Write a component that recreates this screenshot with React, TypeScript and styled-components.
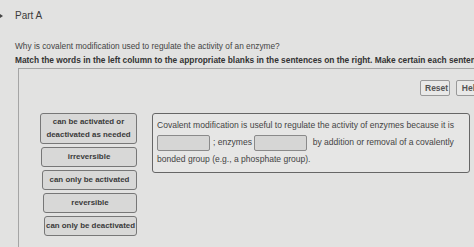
import styled, { createGlobalStyle } from 'styled-components'

const Global = createGlobalStyle`
  html, body {
    margin: 0;
    padding: 0;
    background: #e2e2e1;
    overflow: hidden;
  }
  body {
    font-family: "Liberation Sans", Arial, sans-serif;
    color: #333;
  }
`

const Page = styled.div`
  width: 474px;
  height: 247px;
  padding-top: 10px;
  box-sizing: border-box;
  overflow: hidden;
`

const Header = styled.div`
  display: flex;
  align-items: center;
  height: 11px;
`

const Caret = styled.span`
  width: 0;
  height: 0;
  border-top: 2px solid transparent;
  border-bottom: 2px solid transparent;
  border-left: 3px solid #444;
  margin-right: 12px;
`

const Title = styled.div`
  font-size: 10px;
  color: #3a3a3a;
`

const Question = styled.p`
  margin: 20px 0 0 15px;
  font-size: 8.3px;
  color: #444;
  white-space: nowrap;
`

const Instruction = styled.p`
  margin: 4px 0 0 15px;
  font-size: 8.35px;
  font-weight: bold;
  color: #333;
  white-space: nowrap;
`

const Panel = styled.div`
  margin: 3px 0 0 18px;
  width: 490px;
  height: 200px;
  border-top: 1px solid #a5a5a5;
  border-left: 1px solid #a5a5a5;
  padding: 11px 0 0 21px;
  box-sizing: border-box;
`

const Toolbar = styled.div`
  display: flex;
  justify-content: flex-end;
  gap: 6px;
  padding-right: 22px;
`

const ToolButton = styled.button<{ $w: number }>`
  height: 16px;
  padding: 0 4px;
  font-family: inherit;
  font-size: 8.5px;
  font-weight: bold;
  color: #555;
  background: #e9e9e8;
  border: 1px solid #999;
  border-radius: 2px;
  width: ${p => p.$w}px;
`

const Content = styled.div`
  display: flex;
  align-items: flex-start;
  gap: 15px;
  margin-top: 17px;
`

const Tiles = styled.div`
  display: flex;
  flex-direction: column;
  gap: 3px;
  width: 97px;
`

const Tile = styled.div<{ $shift: number; $multi: boolean }>`
  margin-left: ${p => p.$shift}px;
  padding: 2px 1px;
  font-size: 7.9px;
  font-weight: bold;
  line-height: ${p => (p.$multi ? '12.5px' : '14px')};
  text-align: center;
  white-space: ${p => (p.$multi ? 'normal' : 'nowrap')};
  color: #3a3a3a;
  background: #d8d8d7;
  border: 1px solid #777;
  border-radius: 3px;
`

const SentenceBox = styled.div`
  width: 318px;
  height: 60px;
  box-sizing: border-box;
  padding: 3px 4px;
  font-size: 8.55px;
  line-height: 17px;
  color: #444;
  background: #e6e6e5;
  border: 1px solid #666;
  border-radius: 3px;
  white-space: nowrap;
`

const Blank = styled.span`
  display: inline-block;
  width: 53px;
  height: 16px;
  vertical-align: middle;
  box-sizing: border-box;
  background: #d6d6d5;
  border: 1px solid #8a8a8a;
  border-radius: 2px;
  margin: 0 3px 0 0;
`

const words = [
  'can be activated or deactivated as needed',
  'irreversible',
  'can only be activated',
  'reversible',
  'can only be deactivated',
]

export default function App() {
  return (
    <Page>
      <Global />
      <Header>
        <Caret />
        <Title>Part A</Title>
      </Header>
      <Question>Why is covalent modification used to regulate the activity of an enzyme?</Question>
      <Instruction>
        Match the words in the left column to the appropriate blanks in the sentences on the right. Make certain each sentence is complete before submitting your answer.
      </Instruction>
      <Panel>
        <Toolbar>
          <ToolButton $w={30}>Reset</ToolButton>
          <ToolButton $w={30}>Help</ToolButton>
        </Toolbar>
        <Content>
          <Tiles>
            {words.map((w, i) => (
              <Tile key={w} $shift={i} $multi={i === 0}>{w}</Tile>
            ))}
          </Tiles>
          <SentenceBox>
            Covalent modification is useful to regulate the activity of enzymes because it is
            <br />
            <Blank />; enzymes <Blank /> by addition or removal of a covalently
            <br />
            bonded group (e.g., a phosphate group).
          </SentenceBox>
        </Content>
      </Panel>
    </Page>
  )
}
